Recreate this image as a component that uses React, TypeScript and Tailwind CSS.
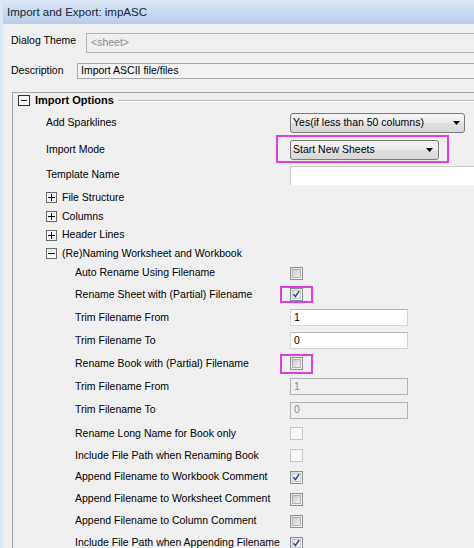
import type { ReactNode } from "react";

// ---------- small widgets ----------

function Arrow() {
  return (
    <svg width="7" height="4" viewBox="0 0 7 4" className="shrink-0">
      <path d="M0 0h7L3.5 4z" fill="#000" />
    </svg>
  );
}

function Dropdown({ value, className }: { value: string; className: string }) {
  return (
    <div
      className={`h-[20px] rounded-[3px] border border-[#7a7a7a] bg-[linear-gradient(to_bottom,#f4f4f4,#ececec_50%,#e0e0e0_50%,#d8d8d8)] flex items-center justify-between pl-[2px] ${className}`}
    >
      <span>{value}</span>
      <Arrow />
    </div>
  );
}

function TextBox({ value, disabled }: { value: string; disabled?: boolean }) {
  return (
    <div
      className={`h-[17px] w-[118px] border flex items-center pl-[3px] ${
        disabled
          ? "bg-[#f0f0f0] border-[#b3b3b3] text-[#8d8d8d]"
          : "bg-white border-[#d7d7d7] border-t-[#b5b7bd] text-black"
      }`}
    >
      {value}
    </div>
  );
}

function Checkbox({ checked, disabled }: { checked?: boolean; disabled?: boolean }) {
  if (disabled) {
    return <div className="w-[13px] h-[13px] border border-[#c6c6c6] bg-[#f7f7f7]" />;
  }
  return (
    <div className="relative w-[13px] h-[13px] border border-[#8e8f8f] bg-[linear-gradient(135deg,#dedede,#ffffff)] flex items-center justify-center">
      <div
        className={`w-[9px] h-[9px] border ${
          checked
            ? "border-[#c3c8d2] bg-[linear-gradient(135deg,#e2e5ea,#f8f8f8)]"
            : "border-[#adb0b5] bg-[linear-gradient(135deg,#c8ccd2,#eeeeee)]"
        }`}
      />
      {checked && (
        <svg viewBox="0 0 13 13" className="absolute inset-0 w-[11px] h-[11px]">
          <path d="M3 6.2 L5.2 9 L9.6 2.6" fill="none" stroke="#2b3f85" strokeWidth="1.7" />
        </svg>
      )}
    </div>
  );
}

function Expander({ open }: { open?: boolean }) {
  return (
    <div className="relative w-[11px] h-[11px] border border-[#6a6a6a] bg-[#f7f7f7] shrink-0">
      <div className="absolute left-[1px] right-[1px] top-[4px] h-[1px] bg-black" />
      {!open && <div className="absolute top-[1px] bottom-[1px] left-[4px] w-[1px] bg-black" />}
    </div>
  );
}

function Mark({ className }: { className: string }) {
  // magenta annotation frame drawn over the control
  return <div className={`absolute border-2 border-[#e13ee2] pointer-events-none ${className}`} />;
}

function Row({
  h,
  indent,
  label,
  expander,
  children,
}: {
  h: string;
  indent: string;
  label: string;
  expander?: "open" | "closed";
  children?: ReactNode;
}) {
  return (
    <div className={`flex shrink-0 ${h}`}>
      <div className={`w-[277px] flex items-center gap-[5px] whitespace-nowrap ${indent}`}>
        {expander && <Expander open={expander === "open"} />}
        <span>{label}</span>
      </div>
      <div className="relative flex-1 flex items-center">{children}</div>
    </div>
  );
}

// ---------- page ----------

export default function App() {
  return (
    <div className="w-[474px] h-[548px] overflow-hidden bg-[#f0f0f0] border-l-[3px] border-[#dbe6f3] flex flex-col text-[10.5px] text-black font-['Liberation_Sans',Arial,sans-serif]">
      {/* title bar */}
      <div className="h-[24px] shrink-0 bg-[linear-gradient(to_bottom,#dae6f3,#b6cee9)] flex items-center pl-[4px] pt-[2px] text-[11.5px] text-[#15233a]">
        Import and Export: impASC
      </div>

      {/* dialog theme */}
      <div className="mt-[9px] flex shrink-0 h-[20px]">
        <div className="w-[83px] pl-[8px] h-[15px] flex items-center">Dialog Theme</div>
        <div className="flex-1 mr-[-4px] border border-[#b4b4b4] bg-[#f0f0f0] text-[#8c8c8c] flex items-center pl-[4px]">
          &lt;sheet&gt;
        </div>
      </div>

      {/* description */}
      <div className="mt-[10px] flex shrink-0 h-[16px]">
        <div className="w-[74px] pl-[8px] flex items-center">Description</div>
        <div className="flex-1 mr-[-4px] border border-[#a9a9a9] bg-[#f3f3f3] flex items-center pl-[3px]">
          Import ASCII file/files
        </div>
      </div>

      {/* tree */}
      <div className="mt-[13px] ml-[9px] flex-1 border-l border-t border-[#a3a3a3] flex flex-col">
        <div className="h-[15px] shrink-0 flex items-center pl-[5px]">
          <div className="relative w-[12px] h-[11px] border border-[#333] bg-[#f7f7f7] shrink-0">
            <div className="absolute left-[2px] right-[2px] top-[4px] h-[1px] bg-black" />
          </div>
          <span className="ml-[5px] font-bold text-[11px]">Import Options</span>
          <div className="flex-1 ml-[4px] mt-[1px] border-t border-[#b9b9b9] border-b border-b-white" />
        </div>

        <Row h="h-[30px]" indent="pl-[33px]" label="Add Sparklines">
          <Dropdown value="Yes(if less than 50 columns)" className="w-[175px] pr-[4px]" />
        </Row>
        <Row h="h-[24px]" indent="pl-[33px]" label="Import Mode">
          <Dropdown value="Start New Sheets" className="w-[149px] pr-[5px]" />
          <Mark className="left-[-14px] top-[-3px] w-[173px] h-[28px]" />
        </Row>
        <Row h="h-[26px]" indent="pl-[33px]" label="Template Name">
          <div className="flex-1 h-[19px] bg-white border-t border-l border-[#cbcbcb]" />
        </Row>
        <Row h="h-[19px]" indent="pl-[33px]" label="File Structure" expander="closed" />
        <Row h="h-[19px]" indent="pl-[33px]" label="Columns" expander="closed" />
        <Row h="h-[18px]" indent="pl-[33px]" label="Header Lines" expander="closed" />
        <Row h="h-[19px]" indent="pl-[33px]" label="(Re)Naming Worksheet and Workbook" expander="open" />

        <Row h="h-[20px]" indent="pl-[62px]" label="Auto Rename Using Filename">
          <Checkbox />
        </Row>
        <Row h="h-[23px]" indent="pl-[62px]" label="Rename Sheet with (Partial) Filename">
          <Checkbox checked />
          <Mark className="left-[-10px] top-[3px] w-[33px] h-[17px]" />
        </Row>
        <Row h="h-[23px]" indent="pl-[62px]" label="Trim Filename From">
          <TextBox value="1" />
        </Row>
        <Row h="h-[23px]" indent="pl-[62px]" label="Trim Filename To">
          <TextBox value="0" />
        </Row>
        <Row h="h-[23px]" indent="pl-[62px]" label="Rename Book with (Partial) Filename">
          <Checkbox />
          <Mark className="left-[-10px] top-[2px] w-[33px] h-[20px]" />
        </Row>
        <Row h="h-[23px]" indent="pl-[62px]" label="Trim Filename From">
          <TextBox value="1" disabled />
        </Row>
        <Row h="h-[24px]" indent="pl-[62px]" label="Trim Filename To">
          <TextBox value="0" disabled />
        </Row>
        <Row h="h-[23px]" indent="pl-[62px]" label="Rename Long Name for Book only">
          <Checkbox disabled />
        </Row>
        <Row h="h-[21px]" indent="pl-[62px]" label="Include File Path when Renaming Book">
          <Checkbox disabled />
        </Row>
        <Row h="h-[22px]" indent="pl-[62px]" label="Append Filename to Workbook Comment">
          <Checkbox checked />
        </Row>
        <Row h="h-[22px]" indent="pl-[62px]" label="Append Filename to Worksheet Comment">
          <Checkbox />
        </Row>
        <Row h="h-[22px]" indent="pl-[62px]" label="Append Filename to Column Comment">
          <Checkbox />
        </Row>
        <Row h="h-[22px]" indent="pl-[62px]" label="Include File Path when Appending Filename">
          <Checkbox checked />
        </Row>
      </div>
    </div>
  );
}
